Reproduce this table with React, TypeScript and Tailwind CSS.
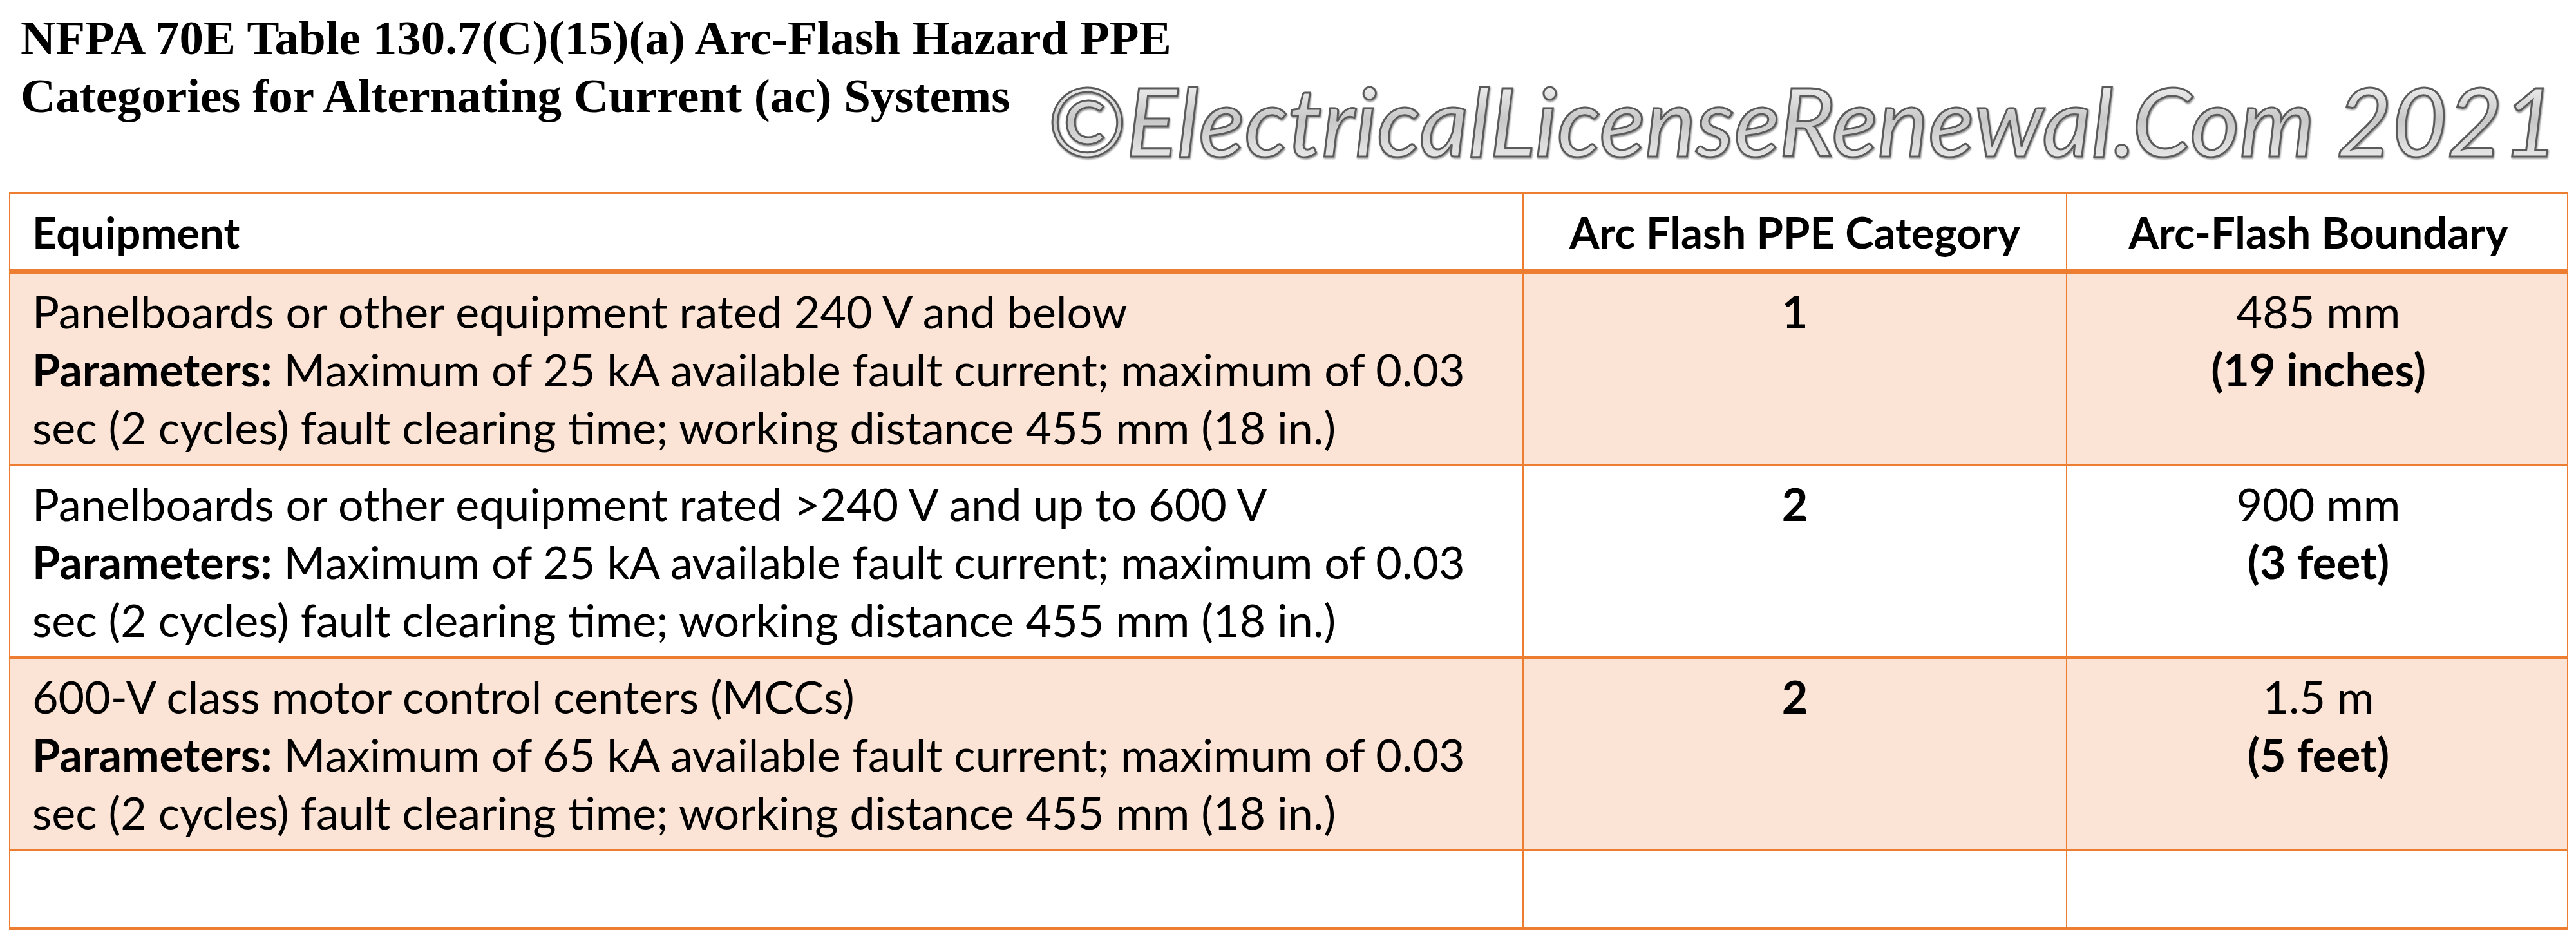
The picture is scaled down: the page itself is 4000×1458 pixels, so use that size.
import React from 'react';

interface Row {
  equipment: string;
  params: string;
  category: string;
  boundary: string;
  boundaryAlt: string;
  shaded: boolean;
}

const rows: Row[] = [
  {
    equipment: 'Panelboards or other equipment rated 240 V and below',
    params: 'Maximum of 25 kA available fault current; maximum of 0.03',
    category: '1',
    boundary: '485 mm',
    boundaryAlt: '(19 inches)',
    shaded: true,
  },
  {
    equipment: 'Panelboards or other equipment rated >240 V and up to 600 V',
    params: 'Maximum of 25 kA available fault current; maximum of 0.03',
    category: '2',
    boundary: '900 mm',
    boundaryAlt: '(3 feet)',
    shaded: false,
  },
  {
    equipment: '600-V class motor control centers (MCCs)',
    params: 'Maximum of 65 kA available fault current; maximum of 0.03',
    category: '2',
    boundary: '1.5 m',
    boundaryAlt: '(5 feet)',
    shaded: true,
  },
];

const cols = 'grid grid-cols-[2348px_844px_782px]';

export default function App() {
  return (
    <div className="relative w-[4000px] h-[1458px] bg-white text-black overflow-hidden">
      {/* title */}
      <div className="pl-[32px] pt-[14px] font-['Liberation_Serif',serif] font-bold text-[75px] leading-[90px]">
        <div>NFPA 70E Table 130.7(C)(15)(a) Arc-Flash Hazard PPE</div>
        <div>Categories for Alternating Current (ac) Systems</div>
      </div>

      {/* watermark */}
      <div className="absolute left-[1626px] top-[112px] font-['Lato',sans-serif] italic font-medium text-[148px] leading-none whitespace-nowrap bg-gradient-to-b from-[#fbfbfb] via-[#c8c8c8] to-[#efefef] bg-clip-text text-transparent [-webkit-text-stroke:3px_#5a5a5a] [filter:drop-shadow(1px_2px_1px_rgba(0,0,0,0.4))]">
        ©ElectricalLicenseRenewal.Com 2021
      </div>

      {/* table */}
      <div className="ml-[14px] mt-[104px] w-[3974px] font-['Lato',sans-serif] text-[70px] leading-[90px] border-l-2 border-r-2 border-[#ED7D31]">
        <div className={`${cols} h-[127px] border-t-4 border-b-[7px] border-[#ED7D31] font-bold text-[67px]`}>
          <div className="flex items-center pl-[34px]">Equipment</div>
          <div className="flex items-center justify-center border-l-2 border-[#ED7D31]">Arc Flash PPE Category</div>
          <div className="flex items-center justify-center border-l-2 border-[#ED7D31]">Arc-Flash Boundary</div>
        </div>

        {rows.map((r, i) => (
          <div
            key={i}
            className={`${cols} h-[299px] border-b-4 border-[#ED7D31] ${r.shaded ? 'bg-[#FBE4D5]' : 'bg-white'}`}
          >
            <div className="pl-[34px] pt-[13px]">
              <div>{r.equipment}</div>
              <div>
                <span className="font-bold">Parameters:</span> {r.params}
              </div>
              <div>sec (2 cycles) fault clearing time; working distance 455 mm (18 in.)</div>
            </div>
            <div className="pt-[13px] text-center font-bold border-l-2 border-[#ED7D31]">{r.category}</div>
            <div className="pt-[13px] text-center border-l-2 border-[#ED7D31]">
              <div>{r.boundary}</div>
              <div className="font-bold">{r.boundaryAlt}</div>
            </div>
          </div>
        ))}

        <div className={`${cols} h-[122px] border-b-4 border-[#ED7D31]`}>
          <div />
          <div className="border-l-2 border-[#ED7D31]" />
          <div className="border-l-2 border-[#ED7D31]" />
        </div>
      </div>
    </div>
  );
}
